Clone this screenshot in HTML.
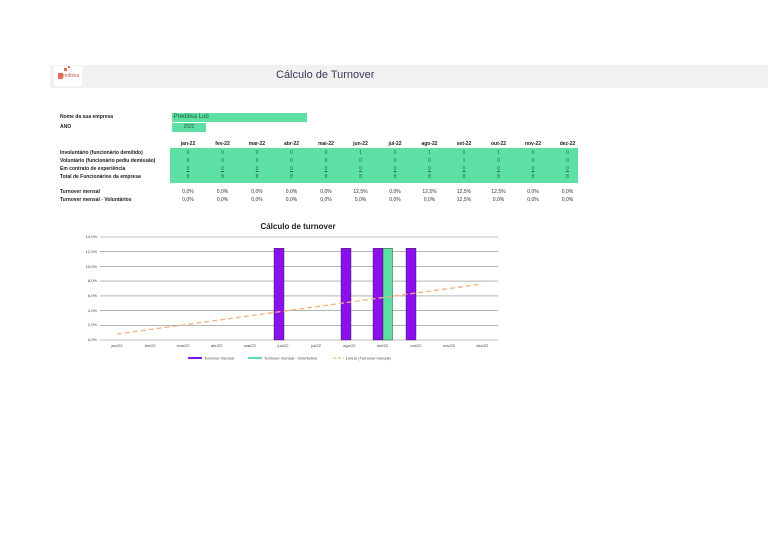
<!DOCTYPE html><html><head><meta charset="utf-8"><style>
*{margin:0;padding:0}body{width:768px;height:543px;background:#fff;position:relative;font-family:"Liberation Sans",sans-serif;overflow:hidden}
.a{position:absolute;white-space:nowrap}
.l{font-size:5px;font-weight:bold;color:#222}
.c{font-size:5px;color:#333;transform:translateX(-50%)}
.ax{font-size:4px;color:#444}
</style></head><body>
<div class="a" style="left:50px;top:65px;width:718px;height:23px;background:#f1f1f1"></div>
<div class="a" style="left:54px;top:66px;width:28px;height:20px;background:#fff"></div>
<div class="a" style="left:58px;top:73px;width:5px;height:6px;background:#e0705a"></div>
<div class="a" style="left:64px;top:68px;width:3px;height:3px;background:#e07050"></div>
<div class="a" style="left:68px;top:66px;width:2px;height:2px;background:#e07050"></div>
<div class="a" style="left:63px;top:73px;font-size:5px;color:#c06050">reditiva</div>
<div class="a" style="left:276px;top:69px;font-size:11px;color:#3a3a5a">Cálculo de Turnover</div>
<div class="a l" style="left:60px;top:114px">Nome da sua empresa</div>
<div class="a l" style="left:60px;top:124px">ANO</div>
<div class="a" style="left:172px;top:113px;width:135px;height:9px;background:#5ee0a4;font-size:6px;color:#1a5a3a;line-height:9px">&nbsp;Preditiva Lub</div>
<div class="a" style="left:172px;top:123px;width:34px;height:9px;background:#5ee0a4;font-size:5px;color:#1a5a3a;line-height:9px;text-align:center">2022</div>
<div class="a" style="left:170px;top:148px;width:408px;height:35px;background:#5ee0a4"></div>
<div class="a l" style="left:60px;top:150px">Involuntário (funcionário demitido)</div>
<div class="a l" style="left:60px;top:158px">Voluntário (funcionário pediu demissão)</div>
<div class="a l" style="left:60px;top:166px">Em contrato de experiência</div>
<div class="a l" style="left:60px;top:174px">Total de Funcionários da empresa</div>
<div class="a l" style="left:60px;top:189px">Turnover mensal</div>
<div class="a l" style="left:60px;top:197px">Turnover mensal - Voluntários</div>
<div id="t"></div>
<svg class="a" style="left:0;top:0" width="768" height="543">
<text x="298" y="229" font-size="8" font-weight="bold" text-anchor="middle" font-family="Liberation Sans" fill="#222">Cálculo de turnover</text>
<g stroke="#888" stroke-width="0.6">
<line x1="100" y1="237" x2="498" y2="237"/><line x1="100" y1="251.7" x2="498" y2="251.7"/><line x1="100" y1="266.4" x2="498" y2="266.4"/><line x1="100" y1="281.1" x2="498" y2="281.1"/><line x1="100" y1="295.9" x2="498" y2="295.9"/><line x1="100" y1="310.6" x2="498" y2="310.6"/><line x1="100" y1="325.3" x2="498" y2="325.3"/><line x1="100" y1="340" x2="498" y2="340"/>
</g>
<g fill="#444" font-size="4" font-family="Liberation Sans" text-anchor="end">
<text x="97" y="238">14,0%</text><text x="97" y="253">12,0%</text><text x="97" y="268">10,0%</text><text x="97" y="282">8,0%</text><text x="97" y="297">6,0%</text><text x="97" y="312">4,0%</text><text x="97" y="326">2,0%</text><text x="97" y="341">0,0%</text>
</g>
<g fill="#8a10ee" stroke="#222" stroke-width="0.4">
<rect x="274" y="248.2" width="10" height="91.8"/><rect x="341" y="248.2" width="10" height="91.8"/><rect x="373" y="248.2" width="10" height="91.8"/><rect x="406" y="248.2" width="10" height="91.8"/>
</g>
<rect x="383" y="248.2" width="9.5" height="91.8" fill="#5ee0a4" stroke="#222" stroke-width="0.4"/>
<line x1="117" y1="334" x2="482" y2="284" stroke="#f4b080" stroke-width="1.3" stroke-dasharray="5,3"/>
<g fill="#444" font-size="4" font-family="Liberation Sans" text-anchor="middle" id="xl"></g>
<rect x="188" y="357" width="14" height="2" fill="#8a10ee"/><text x="204" y="359.5" font-size="4" fill="#444" font-family="Liberation Sans">Turnover mensal</text>
<rect x="248" y="357" width="14" height="2" fill="#5ee0a4"/><text x="264" y="359.5" font-size="4" fill="#444" font-family="Liberation Sans">Turnover mensal - Voluntários</text>
<line x1="333" y1="358" x2="344" y2="358" stroke="#f4b080" stroke-width="1.2" stroke-dasharray="3,2"/><text x="346" y="359.5" font-size="4" fill="#444" font-family="Liberation Sans">Linear (Turnover mensal)</text>
</svg>
<script>
var m=['jan','fev','mar','abr','mai','jun','jul','ago','set','out','nov','dez'];
var inv=[0,0,0,0,0,1,0,1,0,1,0,0],vol=[0,0,0,0,0,0,0,0,1,0,0,0];
var t1=['0,0%','0,0%','0,0%','0,0%','0,0%','12,5%','0,0%','12,5%','12,5%','12,5%','0,0%','0,0%'];
var t2=['0,0%','0,0%','0,0%','0,0%','0,0%','0,0%','0,0%','0,0%','12,5%','0,0%','0,0%','0,0%'];
var h='';
for(var i=0;i<12;i++){var x=188+i*34.5;
h+='<div class="a c" style="left:'+x+'px;top:141px;font-weight:bold;color:#222">'+m[i]+'-22</div>';
var v=[inv[i],vol[i],'<u>0</u>',8];
for(var j=0;j<4;j++)h+='<div class="a c" style="left:'+x+'px;top:'+(150+j*8)+'px;color:#1a6a4a">'+v[j]+'</div>';
h+='<div class="a c" style="left:'+x+'px;top:189px">'+t1[i]+'</div><div class="a c" style="left:'+x+'px;top:197px">'+t2[i]+'</div>';}
document.getElementById('t').innerHTML=h;
var g='';for(var i=0;i<12;i++){g+='<text x="'+(117+i*33.2)+'" y="347">'+m[i]+'/22</text>';}
document.getElementById('xl').innerHTML=g;
</script>
</body></html>
